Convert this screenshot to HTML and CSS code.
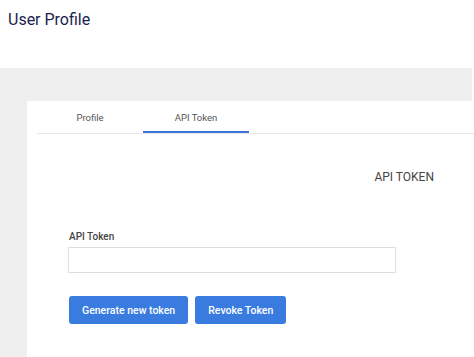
FILE: index.html
```html
<!DOCTYPE html>
<html>
<head>
<meta charset="utf-8">
<link rel="stylesheet" href="styles.css">
</head>
<body>
<h1 class="title">User Profile</h1>
<div class="main">
  <div class="card">
    <div class="tabs">
      <div class="tab">Profile</div>
      <div class="tab active">API Token</div>
    </div>
    <div class="content">
      <div class="heading-row"><h2 class="heading">API TOKEN</h2></div>
      <label class="label">API Token</label>
      <input class="input" type="text">
      <div class="buttons">
        <button class="btn">Generate new token</button>
        <button class="btn">Revoke Token</button>
      </div>
    </div>
  </div>
</div>
</body>
</html>
```
FILE: styles.css
```css
html, body {
  margin: 0;
  padding: 0;
  background: #fff;
  font-family: Roboto, "Liberation Sans", sans-serif;
  overflow: hidden;
}
.title {
  margin: 0;
  padding: 10px 8px 0;
  height: 58px;
  font-size: 16px;
  font-weight: 400;
  line-height: 20px;
  color: #1d1d4f;
}
.main {
  width: 445px;
  height: 256px;
  background: #efefef;
  padding: 33px 0 0 27px;
}
.card {
  width: 447px;
  height: 256px;
  background: #fff;
}
.tabs {
  display: flex;
  margin-left: 10px;
  border-bottom: 1px solid #e6e6e6;
}
.tab {
  width: 106px;
  height: 30px;
  line-height: 33px;
  text-align: center;
  font-size: 9.5px;
  color: #555;
  border-bottom: 2px solid transparent;
}
.tab.active {
  border-bottom-color: #3b74d6;
}
.content {
  padding: 35px 0 0 42px;
}
.heading-row {
  display: flex;
  justify-content: flex-end;
  padding-right: 40px;
}
.heading {
  margin: 0;
  font-size: 12px;
  font-weight: 400;
  line-height: 16px;
  color: #444;
}
.label {
  display: block;
  margin-top: 45px;
  font-size: 10px;
  font-weight: 500;
  line-height: 14px;
  color: #444;
}
.input {
  display: block;
  box-sizing: border-box;
  margin: 3px 0 0 -1px;
  width: 328px;
  height: 26px;
  border: 1px solid #dedede;
  border-radius: 1px;
  background: #fff;
  outline: none;
}
.buttons {
  display: flex;
  gap: 7px;
  margin-top: 23px;
}
.btn {
  height: 28px;
  padding: 0 13px;
  border: none;
  border-radius: 3px;
  background: #3a7be0;
  color: #fff;
  font-family: Roboto, "Liberation Sans", sans-serif;
  font-size: 10.5px;
  font-weight: 500;
}
```
